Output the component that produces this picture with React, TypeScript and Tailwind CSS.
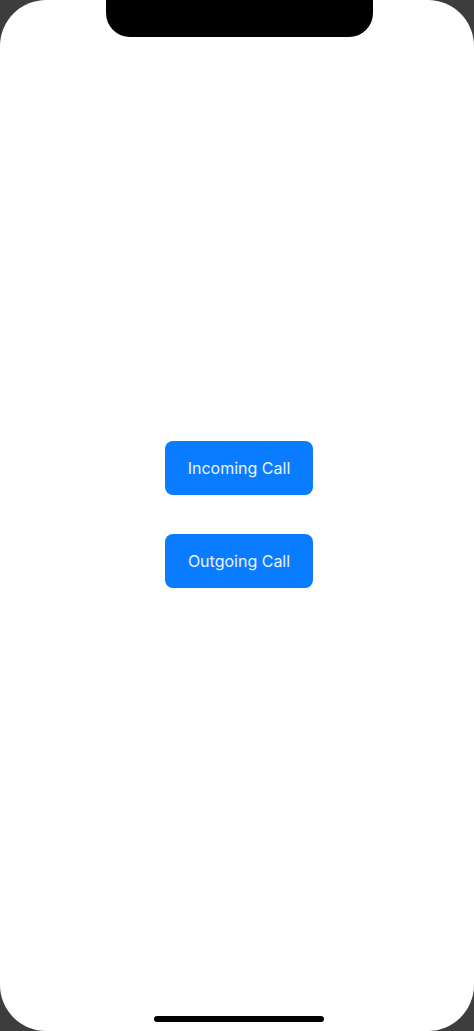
export default function App() {
  return (
    <div className="w-[474px] h-[1031px] bg-[#3d3d3d] overflow-hidden">
      <div className="relative w-full h-full bg-white rounded-[46px] flex flex-col items-center justify-center gap-[39px] pl-[4px] pb-[2px]">
        {/* sensor housing */}
        <div className="absolute top-0 left-[106px] w-[267px] h-[37px] bg-black rounded-b-[24px]" />
        <button className="w-[148px] h-[54px] rounded-[8px] bg-[#0a7cff] text-[#eaf3ff] text-[16px] font-['Inter',sans-serif]">
          Incoming Call
        </button>
        <button className="w-[148px] h-[54px] rounded-[8px] bg-[#0a7cff] text-[#eaf3ff] text-[16px] font-['Inter',sans-serif]">
          Outgoing Call
        </button>
        {/* home indicator */}
        <div className="absolute bottom-[9px] left-[154px] w-[170px] h-[6px] rounded-full bg-black" />
      </div>
    </div>
  );
}
